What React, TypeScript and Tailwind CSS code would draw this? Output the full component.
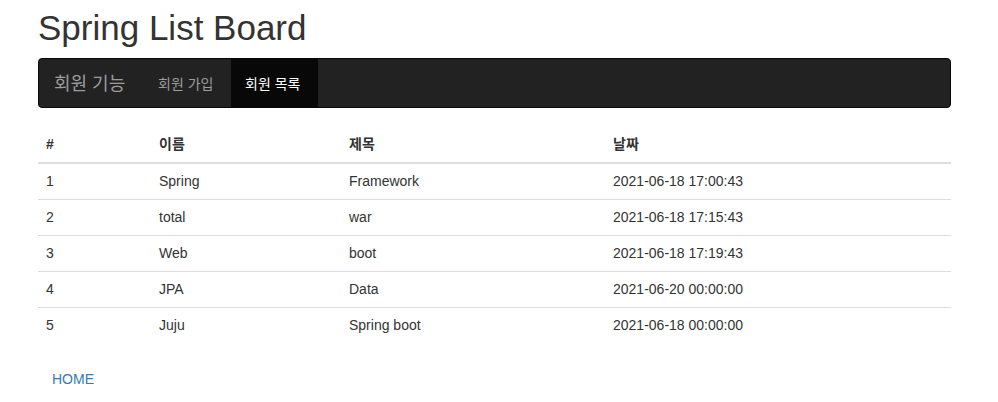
import React from 'react';

const rows = [
  { id: 1, name: 'Spring', title: 'Framework', date: '2021-06-18 17:00:43' },
  { id: 2, name: 'total', title: 'war', date: '2021-06-18 17:15:43' },
  { id: 3, name: 'Web', title: 'boot', date: '2021-06-18 17:19:43' },
  { id: 4, name: 'JPA', title: 'Data', date: '2021-06-20 00:00:00' },
  { id: 5, name: 'Juju', title: 'Spring boot', date: '2021-06-18 00:00:00' },
];

const App = () => {
  return (
    <div className="min-h-[402px] bg-white text-[#333] text-[14px] leading-[20px] font-['Liberation_Sans','Noto_Sans_CJK_KR',sans-serif]">
      <div className="ml-[38px] w-[913px] pt-[8px]">
        <h1 className="text-[35px] leading-[39.6px] font-normal mb-[10px]">Spring List Board</h1>

        <nav className="flex h-[50px] bg-[#222] border border-[#080808] rounded-[4px] overflow-hidden">
          <a href="#" className="w-[104px] pl-[15px] py-[15px] text-[18px] leading-[20px] text-[#9d9d9d] whitespace-nowrap">회원 기능</a>
          <a href="#" className="w-[88px] pl-[15px] py-[15px] leading-[20px] text-[#9d9d9d] whitespace-nowrap">회원 가입</a>
          <a href="#" className="w-[87px] pl-[14px] py-[15px] leading-[20px] text-white bg-[#080808] whitespace-nowrap">회원 목록</a>
        </nav>

        <table className="w-full mt-[18px] mb-[20px] border-collapse table-fixed">
          <colgroup>
            <col className="w-[113px]" />
            <col className="w-[190px]" />
            <col className="w-[264px]" />
            <col />
          </colgroup>
          <thead>
            <tr>
              <th className="text-left font-bold p-[8px] border-b-2 border-[#ddd]">#</th>
              <th className="text-left font-bold p-[8px] border-b-2 border-[#ddd]">이름</th>
              <th className="text-left font-bold p-[8px] border-b-2 border-[#ddd]">제목</th>
              <th className="text-left font-bold p-[8px] border-b-2 border-[#ddd]">날짜</th>
            </tr>
          </thead>
          <tbody>
            {rows.map((r, i) => (
              <tr key={r.id} className="leading-[19px]">
                <td className={`p-[8px] ${i > 0 ? 'border-t border-[#ddd]' : ''}`}>{r.id}</td>
                <td className={`p-[8px] ${i > 0 ? 'border-t border-[#ddd]' : ''}`}>{r.name}</td>
                <td className={`p-[8px] ${i > 0 ? 'border-t border-[#ddd]' : ''}`}>{r.title}</td>
                <td className={`p-[8px] ${i > 0 ? 'border-t border-[#ddd]' : ''}`}>{r.date}</td>
              </tr>
            ))}
          </tbody>
        </table>

        <div className="pl-[14px] pt-[6px]">
          <a href="#" className="text-[#337ab7]">HOME</a>
        </div>
      </div>
    </div>
  );
};

export default App;
